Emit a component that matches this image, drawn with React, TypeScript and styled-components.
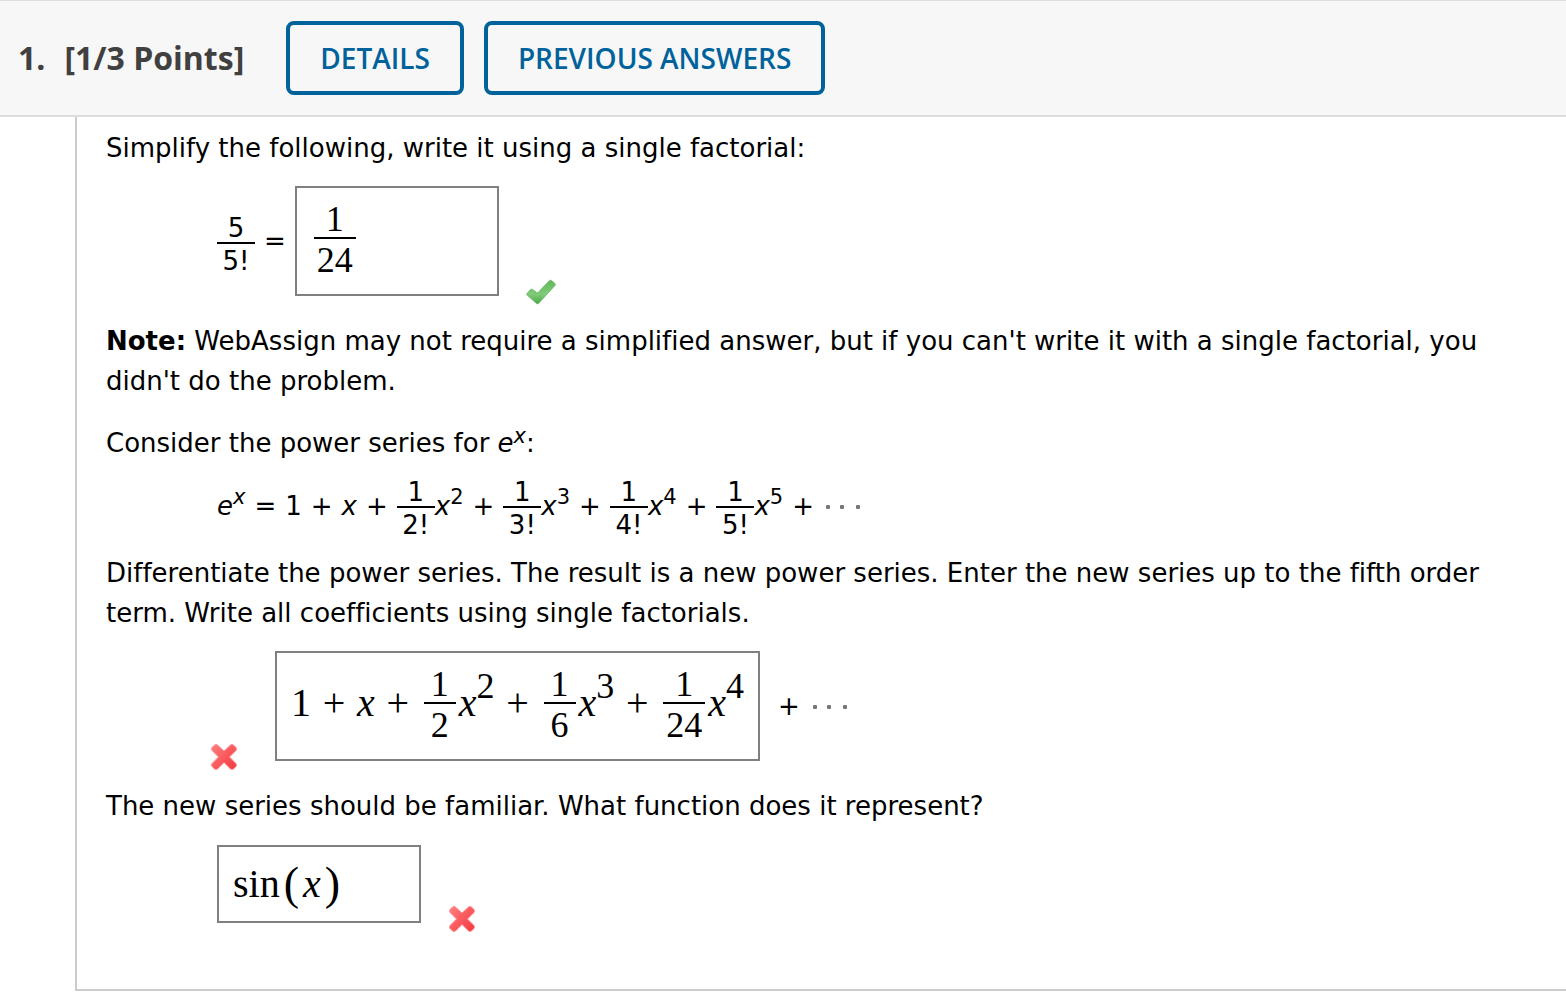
import React from "react";
import styled, { createGlobalStyle } from "styled-components";

const GlobalStyle = createGlobalStyle`
  *, *::before, *::after { box-sizing: border-box; }
  body {
    margin: 0;
    background: #fff;
    color: #000;
    font-family: Verdana, "DejaVu Sans", sans-serif;
    font-size: 26px;
    font-variant-ligatures: none;
    line-height: 40px;
  }
`;

const Header = styled.header`
  display: flex;
  align-items: center;
  padding: 20px 18px;
  background: #f7f7f7;
  border-top: 1px solid #ddd;
  border-bottom: 2px solid #ddd;
  color: #404040;
  font-family: "Open Sans", sans-serif;
`;

const Title = styled.h1`
  display: flex;
  gap: 19px;
  margin: 0 42px 0 0;
  font-size: 32px;
  font-weight: 700;
  line-height: 40px;
`;

const Actions = styled.div`
  display: flex;
  gap: 20px;
`;

const ActionButton = styled.button`
  padding: 13px 30px;
  border: 4px solid #00629b;
  border-radius: 8px;
  background: transparent;
  color: #00629b;
  font: 600 28px/40px "Open Sans", sans-serif;
  text-transform: uppercase;
  cursor: pointer;
`;

const Question = styled.main`
  margin-left: 75px;
  padding: 11px 30px 66px 29px;
  border-left: 2px solid #ccc;
  border-bottom: 2px solid #ccc;
`;

const Paragraph = styled.p`
  margin: 0 0 22px;
`;

const Lead = styled(Paragraph)<{ $gap?: number }>`
  margin-bottom: ${(p) => p.$gap ?? 18}px;
`;

const MathRow = styled.div<{ $after: number }>`
  display: flex;
  align-items: center;
  margin: 0 0 ${(p) => p.$after}px 111px;
  line-height: 28px;
`;

const MarkedRow = styled(MathRow)`
  margin-left: 103px;
`;

const Op = styled.span`
  margin: 0 9px;
`;

const Sup = styled.sup`
  padding-bottom: 18px;
  font-size: 21px;
  line-height: 28px;
  vertical-align: baseline;
`;

const InlineSup = styled.sup`
  font-size: 21px;
  font-style: italic;
  line-height: 0;
  vertical-align: 9px;
`;

const FractionBox = styled.span`
  display: flex;
  flex-direction: column;
  align-items: stretch;
  min-width: 38px;
  padding-top: 6px;
  text-align: center;
`;

const Denominator = styled.span`
  padding-top: 3px;
  border-top: 2px solid #000;
`;

const Field = styled.div<{ $height: number; $low?: boolean }>`
  display: flex;
  align-items: center;
  min-width: 204px;
  height: ${(p) => p.$height}px;
  padding: 0 14px ${(p) => (p.$low ? 0 : 6)}px;
  border: 2px solid #808080;
  font-family: "Liberation Serif", "Times New Roman", serif;
  font-size: 40px;
  line-height: 40px;
`;

const FieldFraction = styled.span`
  display: flex;
  flex-direction: column;
  min-width: 32px;
  margin: 0 3px;
  padding-top: 3px;
  font-size: 36px;
  line-height: 36px;
  text-align: center;
`;

const FieldDenominator = styled.span`
  padding: 3px 3px 0;
  border-top: 2px solid #000;
`;

const FieldOp = styled.span`
  width: 46px;
  text-align: center;
`;

const FieldSup = styled.sup`
  padding-bottom: 34px;
  font-size: 36px;
  line-height: 36px;
  vertical-align: baseline;
`;

const Paren = styled.span`
  padding: 0 4px;
  font-size: 46px;
`;

const Mark = styled.svg`
  flex: none;
  align-self: flex-end;
  width: 32px;
  height: 30px;
  margin: 0 26px -11px;
`;

const LeadingMark = styled(Mark)`
  margin-left: 0;
  margin-right: 34px;
`;

const TrailingOp = styled.span`
  margin: 0 10px 0 18px;
`;

const DotsSvg = styled.svg`
  width: 38px;
  height: 8px;
  fill: #777;
`;

const Frac = ({ n, d }: { n: string; d: string }) => (
  <FractionBox>
    <span>{n}</span>
    <Denominator>{d}</Denominator>
  </FractionBox>
);

const FieldFrac = ({ n, d }: { n: string; d: string }) => (
  <FieldFraction>
    <span>{n}</span>
    <FieldDenominator>{d}</FieldDenominator>
  </FieldFraction>
);

const Dots = () => (
  <DotsSvg viewBox="0 0 38 8" role="img" aria-label="and so on">
    <rect x="3" y="3" width="4" height="4" rx="1" />
    <rect x="17" y="3" width="4" height="4" rx="1" />
    <rect x="33" y="3" width="4" height="4" rx="1" />
  </DotsSvg>
);

const Correct = () => (
  <Mark viewBox="0 0 32 30" role="img" aria-label="Correct">
    <defs>
      <linearGradient id="green" x1="0" y1="0" x2="0" y2="1">
        <stop offset="0" stopColor="#62b55c" />
        <stop offset="0.6" stopColor="#80cb78" />
        <stop offset="1" stopColor="#4aa447" />
      </linearGradient>
    </defs>
    <path
      d="M2 16.5 L5.500 12.500 Q6.500 11.700 7.500 12.500 L12.5 16 L24.500 3.500 Q25.500 2.800 26.500 3.500 L30 6.500 Q31 7.500 30 8.500 L13.500 26.500 Q12.500 27.300 11.500 26.500 L2 18 Q1.300 17.200 2 16.500 Z"
      fill="url(#green)"
      stroke="#7cc277"
      strokeWidth="1"
    />
  </Mark>
);

const crossPath =
  "M3 5.500 L5.500 3 Q7 1.800 8.500 3 L15 9 L21.500 3 Q23 1.800 24.500 3 L27 5.500 Q28 7 27 8.500 L20.500 15 L27 21.500 Q28 23 27 24.500 L24.500 27 Q23 28 21.500 27 L15 20.500 L8.500 27 Q7 28 5.500 27 L3 24.500 Q2 23 3 21.500 L9.500 15 L3 8.500 Q2 7 3 5.500 Z";

const Incorrect = ({ as: Wrapper, id }: { as: typeof Mark; id: string }) => (
  <Wrapper viewBox="0 0 32 30" role="img" aria-label="Incorrect">
    <defs>
      <linearGradient id={id} x1="0" y1="0" x2="1" y2="1">
        <stop offset="0" stopColor="#ff8080" />
        <stop offset="0.5" stopColor="#fa5a5e" />
        <stop offset="1" stopColor="#f0383e" />
      </linearGradient>
    </defs>
    <path d={crossPath} fill={`url(#${id})`} stroke="#ff9498" strokeWidth="1" />
  </Wrapper>
);

const seriesTerms = [2, 3, 4, 5];
const answerTerms = [
  { d: "2", power: "2" },
  { d: "6", power: "3" },
  { d: "24", power: "4" },
];

export default function App() {
  return (
    <>
      <GlobalStyle />
      <Header>
        <Title>
          <span>1.</span>
          <span>[1/3 Points]</span>
        </Title>
        <Actions>
          <ActionButton type="button">Details</ActionButton>
          <ActionButton type="button">Previous Answers</ActionButton>
        </Actions>
      </Header>
      <Question>
        <Lead>Simplify the following, write it using a single factorial:</Lead>
        <MathRow $after={25}>
          <Frac n="5" d="5!" />
          <Op>=</Op>
          <Field $height={110} role="textbox" aria-readonly="true" aria-label="Simplified factorial" tabIndex={0}>
            <FieldFrac n="1" d="24" />
          </Field>
          <Correct />
        </MathRow>

        <Paragraph>
          <b>Note:</b> WebAssign may not require a simplified answer, but if you can't write it with a
          single factorial, you didn't do the problem.
        </Paragraph>

        <Lead $gap={9}>
          Consider the power series for <i>e</i>
          <InlineSup>x</InlineSup>:
        </Lead>
        <MathRow $after={14}>
          <i>e</i>
          <Sup>
            <i>x</i>
          </Sup>
          <Op>=</Op>1<Op>+</Op>
          <i>x</i>
          {seriesTerms.map((n) => (
            <React.Fragment key={n}>
              <Op>+</Op>
              <Frac n="1" d={`${n}!`} />
              <i>x</i>
              <Sup>{n}</Sup>
            </React.Fragment>
          ))}
          <Op>+</Op>
          <Dots />
        </MathRow>

        <Lead>
          Differentiate the power series. The result is a new power series. Enter the new series up to
          the fifth order term. Write all coefficients using single factorials.
        </Lead>
        <MarkedRow $after={25}>
          <Incorrect as={LeadingMark} id="redSeries" />
          <Field $height={110} role="textbox" aria-readonly="true" aria-label="Differentiated series" tabIndex={0}>
            1<FieldOp>+</FieldOp>
            <i>x</i>
            {answerTerms.map((t) => (
              <React.Fragment key={t.power}>
                <FieldOp>+</FieldOp>
                <FieldFrac n="1" d={t.d} />
                <i>x</i>
                <FieldSup>{t.power}</FieldSup>
              </React.Fragment>
            ))}
          </Field>
          <TrailingOp>+</TrailingOp>
          <Dots />
        </MarkedRow>

        <Lead $gap={19}>The new series should be familiar. What function does it represent?</Lead>
        <MathRow $after={0}>
          <Field $height={78} $low role="textbox" aria-readonly="true" aria-label="Function represented" tabIndex={0}>
            sin<Paren>(</Paren>
            <i>x</i>
            <Paren>)</Paren>
          </Field>
          <Incorrect as={Mark} id="redFunction" />
        </MathRow>
      </Question>
    </>
  );
}
